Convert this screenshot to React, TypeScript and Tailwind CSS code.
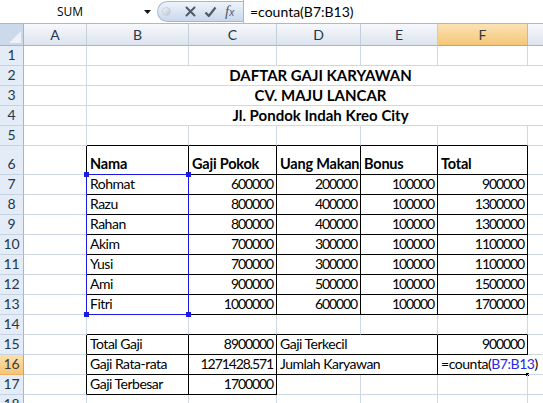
import React from 'react';

type Cell = { t: string; b?: boolean; a?: 'l' | 'r' | 'c'; span?: number };

const COLS = ['A', 'B', 'C', 'D', 'E', 'F', 'G'];
const ROWS = Array.from({ length: 18 }, (_, i) => i + 1);

const cells: Record<string, Cell> = {};
const put = (r: number, c: number, t: string, opts: Partial<Cell> = {}) => {
  cells[`${r}-${c}`] = { t, a: /^[\d.]+$/.test(t) ? 'r' : 'l', ...opts };
};

put(2, 1, 'DAFTAR GAJI KARYAWAN', { b: true, a: 'c', span: 6 });
put(3, 1, 'CV. MAJU LANCAR', { b: true, a: 'c', span: 6 });
put(4, 1, 'Jl. Pondok Indah Kreo City', { b: true, a: 'c', span: 6 });

['Nama', 'Gaji Pokok', 'Uang Makan', 'Bonus', 'Total'].forEach((h, i) => put(6, i + 1, h, { b: true }));

const staff = [
  ['Rohmat', '600000', '200000', '100000', '900000'],
  ['Razu', '800000', '400000', '100000', '1300000'],
  ['Rahan', '800000', '400000', '100000', '1300000'],
  ['Akim', '700000', '300000', '100000', '1100000'],
  ['Yusi', '700000', '300000', '100000', '1100000'],
  ['Ami', '900000', '500000', '100000', '1500000'],
  ['Fitri', '1000000', '600000', '100000', '1700000'],
];
staff.forEach((row, i) => row.forEach((v, j) => put(7 + i, j + 1, v)));

put(15, 1, 'Total Gaji');
put(15, 2, '8900000');
put(15, 3, 'Gaji Terkecil', { span: 2 });
put(15, 5, '900000');
put(16, 1, 'Gaji Rata-rata');
put(16, 2, '1271428.571');
put(16, 3, 'Jumlah Karyawan', { span: 2 });
put(17, 1, 'Gaji Terbesar');
put(17, 2, '1700000');

// bordered blocks on the sheet
const inBlock = (r: number, c: number) =>
  (r >= 6 && r <= 13 && c >= 1 && c <= 5) ||
  (r >= 15 && r <= 17 && c >= 1 && c <= 2) ||
  (r >= 15 && r <= 16 && c >= 3 && c <= 5);

const FONT = "font-['Lato','Noto_Sans',sans-serif]";

function FormulaBar() {
  return (
    <div className="h-[24px] flex bg-white border-b border-[#a7bad3] font-['Open_Sans','Noto_Sans',sans-serif] text-[12px] text-black">
      <div className="w-[140px] flex items-center justify-center">SUM</div>
      <div className="w-[17px] flex items-center justify-center pr-[2px]">
        <svg width="7" height="4" viewBox="0 0 7 4">
          <path d="M0 0H7L3.5 4Z" fill="#111" />
        </svg>
      </div>
      <div className="w-[86px] my-[1px] rounded-l-[11px] border border-r-0 border-[#a5b8d2] bg-gradient-to-b from-[#eef3fa] to-[#c9d8ec] flex items-center">
        <div className="ml-[4px] w-[9px] h-[9px] rounded-full bg-gradient-to-br from-[#f4f6f9] to-[#b9c3d0] border border-[#c8d0da]" />
        <svg className="ml-[14px]" width="11" height="11" viewBox="0 0 11 11">
          <path d="M1.5 1.5L9.5 9.5M9.5 1.5L1.5 9.5" stroke="#4f5a68" strokeWidth="2" strokeLinecap="round" />
        </svg>
        <svg className="ml-[8px]" width="13" height="12" viewBox="0 0 13 12">
          <path d="M1.5 6.5L4.8 10L11.5 1.5" stroke="#4f5a68" strokeWidth="2.2" fill="none" strokeLinejoin="round" />
        </svg>
        <span className="ml-[8px] font-['Liberation_Serif',serif] italic text-[15px] leading-none text-[#4f5a68]">
          f<span className="text-[10px] font-['Liberation_Sans',sans-serif] italic">x</span>
        </span>
      </div>
      <div className={`flex-1 flex items-center pl-[6px] border-l border-[#a5b8d2] ${FONT} text-[14px]`}>
        =counta(B7:B13)
      </div>
    </div>
  );
}

function ColHeader({ name }: { name: string }) {
  const sel = name === 'F';
  return (
    <div
      className={`flex items-center justify-center border-r border-b text-[14px] ${
        sel
          ? 'bg-gradient-to-b from-[#fbe2b4] to-[#f5c778] border-r-[#f0b060] border-b-[#f29536] text-[#3a3a3a]'
          : 'bg-gradient-to-b from-[#f6f8fb] to-[#dde4ee] border-r-[#c5cfdc] border-b-[#9eb6ce] text-[#27364a]'
      }`}
    >
      {/* G's label sits past the window edge */}
      {name === 'G' ? '' : name}
    </div>
  );
}

function RowHeader({ r }: { r: number }) {
  const sel = r === 16;
  return (
    <div
      className={`flex items-end justify-center pb-[1px] border-r border-b text-[14px] leading-[18px] ${
        sel
          ? 'bg-gradient-to-b from-[#fbe0ad] to-[#f5c574] border-r-[#f29536] border-b-[#f0b060] text-[#3a3a3a]'
          : 'bg-[#e4ecf7] border-r-[#9eb6ce] border-b-[#c5d2e2] text-[#27364a]'
      }`}
    >
      {r}
    </div>
  );
}

function SheetCell({ r, c }: { r: number; c: number }) {
  const cell = cells[`${r}-${c}`];
  const span = cell?.span ?? 1;
  const last = c + span - 1;
  const rightBlack = inBlock(r, last) || inBlock(r, last + 1);
  const bottomBlack = inBlock(r, c) || inBlock(r + 1, c);
  const isEdit = r === 16 && c === 5;
  const isSelTop = r === 7 && c === 1;
  const isTitle = cell?.a === 'c';

  const right = isEdit || isTitle ? 'border-r-transparent' : rightBlack ? 'border-r-black' : 'border-r-[#d0d7e5]';
  const bottom = bottomBlack ? 'border-b-black' : 'border-b-[#d0d7e5]';
  const justify =
    cell?.a === 'r' ? 'justify-end tracking-[-1.1px]' : cell?.a === 'c' ? 'justify-center pr-[40px]' : 'justify-start';
  const weight = isTitle
    ? 'font-bold text-[15px]'
    : cell?.b
      ? 'font-bold text-[14.5px] tracking-[-0.2px]'
      : 'text-[14px] tracking-[-0.5px]';

  return (
    <div
      className={`relative flex items-end px-[3px] pb-[1px] border-r border-b whitespace-nowrap leading-[18px] text-black ${right} ${bottom} ${weight} ${justify} ${
        span === 2 ? 'col-span-2' : span === 6 ? 'col-span-6' : ''
      }`}
    >
      {cell?.t}
      {isEdit && (
        <>
          <span className="tracking-[-0.45px]">
            =counta(<span className="text-[#2626e8]">B7:B13</span>)
          </span>
          <div className="absolute -right-[2px] -bottom-[2px] w-[3px] h-[3px] bg-black" />
        </>
      )}
      {isSelTop && (
        <div className="absolute -left-px -top-px w-[103px] h-[141px] border border-[#1a1ae6] pointer-events-none z-10">
          <div className="absolute -left-[3px] -top-[3px] w-[5px] h-[5px] bg-[#1a1ae6]" />
          <div className="absolute -right-[3px] -top-[3px] w-[5px] h-[5px] bg-[#1a1ae6]" />
          <div className="absolute -left-[3px] -bottom-[3px] w-[5px] h-[5px] bg-[#1a1ae6]" />
          <div className="absolute -right-[3px] -bottom-[3px] w-[5px] h-[5px] bg-[#1a1ae6]" />
        </div>
      )}
    </div>
  );
}

export default function App() {
  return (
    <div className="w-[543px] h-[403px] overflow-hidden bg-white">
      <FormulaBar />
      <div
        className={`grid w-[592px] grid-cols-[24px_63px_102px_88px_84px_77px_90px_64px] grid-rows-[22px_repeat(5,20px)_29px_repeat(12,20px)] bg-white ${FONT}`}
      >
        <div className="relative bg-[#cbd9eb] border-r border-b border-[#9eb6ce]">
          <svg className="absolute right-[2px] bottom-[2px]" width="12" height="12" viewBox="0 0 12 12">
            <path d="M12 0V12H0Z" fill="#eef2f8" />
          </svg>
        </div>
        {COLS.map((n) => (
          <ColHeader key={n} name={n} />
        ))}
        {ROWS.map((r) => {
          const out: React.ReactNode[] = [<RowHeader key={`h${r}`} r={r} />];
          for (let c = 0; c < COLS.length; c++) {
            out.push(<SheetCell key={`${r}-${c}`} r={r} c={c} />);
            const span = cells[`${r}-${c}`]?.span ?? 1;
            c += span - 1;
          }
          return out;
        })}
      </div>
    </div>
  );
}
